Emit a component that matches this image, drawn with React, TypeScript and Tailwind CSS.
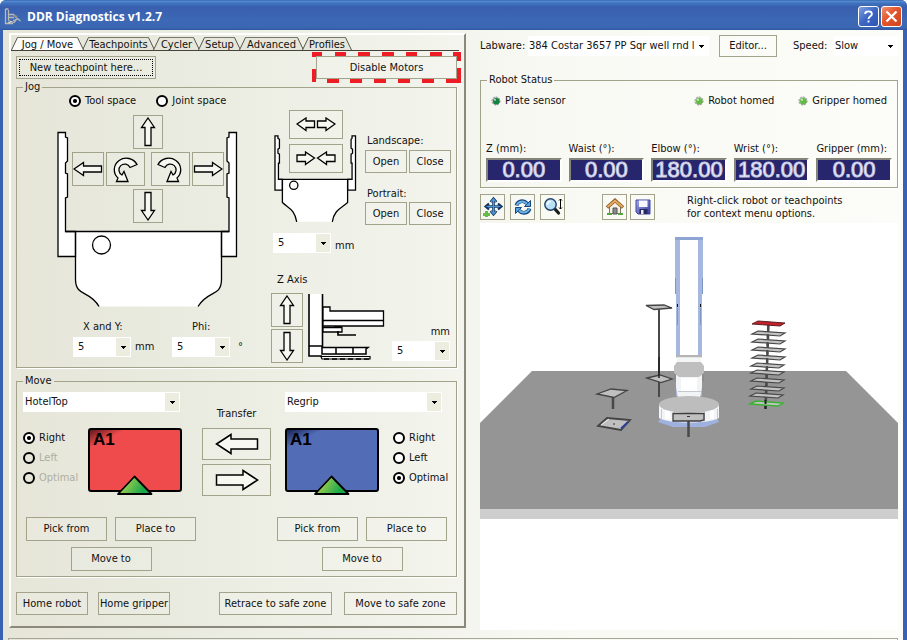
import React from "react";

type Kids = { children: React.ReactNode; className?: string };

function Btn({ children, className = "", label }: Kids & { label?: string }) {
  return (
    <button
      type="button"
      aria-label={label}
      className={`flex items-center justify-center whitespace-nowrap border border-[#a3a28a] bg-white/10 ${className}`}
    >
      {children}
    </button>
  );
}

function Combo({ label, options, className = "", plain = false, indent = "pl-1" }: { label: string; options: string[]; className?: string; plain?: boolean; indent?: string }) {
  return (
    <div className={`relative flex h-5 border border-white bg-white ${className}`}>
      <select aria-label={label} className={`w-full appearance-none overflow-hidden bg-transparent pr-3.5 text-[11px] leading-4 outline-none ${indent}`}>
        {options.map((o) => (
          <option key={o}>{o}</option>
        ))}
      </select>
      <span className={`pointer-events-none absolute inset-y-0 right-0 flex w-3.5 items-center justify-center ${plain ? "" : "bg-[#eceddf]"}`}>
        <svg width="5" height="3" viewBox="0 0 5 3" shapeRendering="crispEdges">
          <path d="M0 0h5v1H4v1H3v1H2V2H1V1H0z" />
        </svg>
      </span>
    </div>
  );
}

function Radio({ name, label, checked, disabled }: { name: string; label: string; checked?: boolean; disabled?: boolean }) {
  return (
    <label className={`flex items-center gap-1 ${disabled ? "text-[#aeae9f]" : ""}`}>
      <input
        type="radio"
        name={name}
        defaultChecked={checked}
        disabled={disabled}
        className="size-3 shrink-0 appearance-none rounded-full border-2 border-black bg-white checked:bg-[radial-gradient(circle,#000_0,#000_1.5px,#fff_2.5px)] disabled:bg-transparent"
      />
      {label}
    </label>
  );
}

function Group({ title, children, className = "" }: Kids & { title: string }) {
  return (
    <fieldset className={`min-w-0 border border-[#a3a28a] shadow-[1px_1px_0_#fff] ${className}`}>
      <legend className="ml-1.5 px-0.5 leading-[14px]">{title}</legend>
      {children}
    </fieldset>
  );
}

function Arrow({ dir }: { dir: "up" | "down" | "left" | "right" }) {
  const turn = { up: 0, right: 90, down: 180, left: 270 }[dir];
  return (
    <svg width="30" height="30" viewBox="0 0 30 30" className="shrink-0" fill="#f8f8f2" stroke="#000" strokeWidth="1.3">
      <path transform={`rotate(${turn} 15 15)`} d="M15 1 L21.500 10.500 H18 V28.500 H12 V10.500 H8.500 Z" />
    </svg>
  );
}

function WideArrow({ flip }: { flip?: boolean }) {
  return (
    <svg width="44" height="22" viewBox="0 0 44 22" fill="#f8f8f2" stroke="#000" strokeWidth="1.5">
      <path transform={flip ? "rotate(180 22 11)" : undefined} d="M1.500 11 L16 1.500 V6 H42.500 V16 H16 V20.500 Z" />
    </svg>
  );
}

function TurnArrow({ flip }: { flip?: boolean }) {
  return (
    <svg width="28" height="28" viewBox="0 0 28 28" fill="#f8f8f2" stroke="#000" strokeWidth="1.3">
      <path
        transform={flip ? "translate(28 0) scale(-1 1)" : undefined}
        d="M26 9.500 A12 11.500 0 1 0 7 23 L5.500 26.500 H17 L13 16.500 L11 20 A5.800 5.800 0 1 1 19 12.500 Z"
      />
    </svg>
  );
}

function PairArrows({ inward }: { inward?: boolean }) {
  const left = "M1 7 L10 1 V4 H18.500 V10.500 H10 V13.500 Z";
  return (
    <svg width="40" height="15" viewBox="0 0 40 15" fill="#f8f8f2" stroke="#000" strokeWidth="1.3">
      <path transform={inward ? "translate(20.500 0)" : undefined} d={left} />
      <path transform={inward ? "translate(19.500 0) scale(-1 1)" : "translate(40 0) scale(-1 1)"} d={left} />
    </svg>
  );
}

function BigGripper() {
  return (
    <svg viewBox="57 115 181 192" className="absolute inset-0 size-full" fill="#fff" stroke="#000" strokeWidth="1.300">
      <path stroke="none" d="M75.500 231V280C76 297 90 290 99 306.500H198C208 290 221 297 221.500 280V231Z" />
      <path d="M75.500 231.500V256.500H58V132.500H65.500V137L67.500 138V161L65.500 163V173L67.500 174V197L65.500 198V231.500Z" />
      <path d="M221.500 231.500V256.500H236.500V132.500H229V137L227 138V161L229 163V173L227 174V197L229 198V231.500Z" />
      <path fill="none" d="M65.500 231.500H229M75.500 231V280C76 297 90 290 99 306.500M221.500 231V280C221 297 208 290 198 306.500" />
      <circle cx="101.500" cy="245" r="9" />
    </svg>
  );
}

function SmallGripper() {
  return (
    <svg viewBox="274 110 84 113" className="absolute inset-0 size-full" fill="#fff" stroke="#000" strokeWidth="1.3">
      <path stroke="none" d="M282.500 179V203C289 209 295 210 297 222.500H333C335 210 342 209 348.500 203V179Z" />
      <path d="M282.500 179.500V190.500H275V135.500H278V138L279.500 139V148L278 149V153L279.500 154V163H278.500V179.500Z" />
      <path d="M348.500 179.500V190.500H356.500V135.500H353V138L352 139V148L353.500 149V153L352 154V163H353V179.500Z" />
      <path fill="none" d="M278 179.500H353M282.500 179V203C289 209 295 210 297 222.500M348.500 179V203C342 209 335 210 333 222.500" />
      <circle cx="294" cy="185.500" r="4.200" />
    </svg>
  );
}

function ZDrawing() {
  return (
    <svg width="78" height="68" viewBox="308 294 78 68" fill="#fff" stroke="#000" strokeWidth="1.3">
      <path stroke="none" d="M309 295H322V357H309Z" />
      <path fill="none" strokeWidth="1.6" d="M309 295V357H322M322.500 295V350M309 347H322" />
      <path d="M323 308H330V312H383.500V327H323ZM323 321.500H383" />
      <path d="M323 328.500H342V333H323Z" />
      <path fill="none" strokeWidth="1.700" d="M334 328H342M338 332V336H356" />
      <path d="M322 348.500H368L366 350V355H322ZM336 349V355M353 349V355" strokeWidth="1.500" />
      <path d="M321 357.500H370V360H322Z" strokeWidth="1.200" />
      <path d="M324 360H370" strokeWidth="1.600" strokeDasharray="5 3" />
    </svg>
  );
}

function Plate({ tone }: { tone: "red" | "blue" }) {
  const fill = tone === "red" ? "#ef4b4c" : "#526cb5";
  const dark = tone === "red" ? "#541416" : "#121d4e";
  return (
    <svg width="94" height="68" viewBox="0 0 94 68" stroke="#000" className="shrink-0">
      <defs>
        <linearGradient id={`corner-${tone}`} x1="0" y1="0" x2="0.15" y2="0.2">
          <stop offset="0" stopColor={dark} />
          <stop offset="1" stopColor={fill} />
        </linearGradient>
        <linearGradient id={`tri-${tone}`} x1="0" y1="0" x2="1" y2="0.3">
          <stop offset="0.3" stopColor="#9bcb50" />
          <stop offset="0.9" stopColor="#18a84a" />
        </linearGradient>
      </defs>
      <rect x="1" y="1" width="92" height="62" rx="2" fill={`url(#corner-${tone})`} strokeWidth="2" />
      <path d="M30 66 L46.500 48.500 L63.500 66 Z" fill={`url(#tri-${tone})`} strokeWidth="1.800" strokeLinejoin="round" />
      <text x="5" y="17" fontFamily="Liberation Sans, sans-serif" fontSize="17" fontWeight="bold" stroke="none">A1</text>
    </svg>
  );
}

function Tab({ label, active, className }: { label: string; active?: boolean; className: string }) {
  const fill = active ? "#fcfcfa" : "#e6e7da";
  return (
    <button
      type="button"
      role="tab"
      aria-selected={!!active}
      className={`-mr-0.5 flex h-[13px] ${className} ${active ? "relative z-10" : ""}`}
    >
      <svg width="7" height="13" viewBox="0 0 7 13" className="shrink-0">
        <path d="M0.500 13 L6.500 0.500 H7 V13Z" fill={fill} />
        <path d="M0.500 13 L6.500 0.500 H7" fill="none" stroke="#55554d" />
      </svg>
      <span className={`h-[13px] flex-1 whitespace-nowrap border-t border-[#77776d] text-center text-[11px] leading-[13px] ${active ? "bg-[#fcfcfa]" : "bg-[#e6e7da]"}`}>
        {label}
      </span>
      <svg width="7" height="13" viewBox="0 0 7 13" className="shrink-0">
        <path d="M0 0.500 H0.500 L6.500 13 H0Z" fill={fill} />
        <path d="M0 0.500 H0.500 L6.500 13" fill="none" stroke="#55554d" />
      </svg>
    </button>
  );
}

function Led({ label, dark }: { label: string; dark?: boolean }) {
  return (
    <span className="flex items-center gap-1">
      <svg width="10" height="10" viewBox="0 0 10 10">
        <circle cx="5" cy="5" r="4" fill="#ddd" stroke="#888" strokeDasharray="2 1" />
        <circle cx="5.300" cy="5.300" r="3.300" fill={dark ? "#118243" : "#62bb46"} />
        <circle cx="4" cy="3.800" r="0.900" fill="#e8ffe0" />
      </svg>
      {label}
    </span>
  );
}

function Readout({ label, value }: { label: string; value: string }) {
  return (
    <div className="flex min-w-0 flex-col gap-0.5">
      <span className="whitespace-nowrap">{label}</span>
      <output
        aria-label={label}
        className="flex h-6 items-center justify-center overflow-hidden border-2 border-b-white border-l-[#85847a] border-r-white border-t-[#85847a] bg-[#27266c] font-['Liberation_Sans',sans-serif] text-[22px] leading-5 text-white [-webkit-text-stroke:1px_#c3c4e2]"
      >
        {value}
      </output>
    </div>
  );
}

function MovePanel({ name, place, tone, right }: { name: string; place: string; tone: "red" | "blue"; right?: boolean }) {
  const radios = (
    <div className="flex flex-col gap-1.5 pt-[3px]">
      <Radio name={name} label="Right" checked={!right} />
      <Radio name={name} label="Left" disabled={!right} />
      <Radio name={name} label="Optimal" checked={right} disabled={!right} />
    </div>
  );
  return (
    <div className="flex w-[173px] shrink-0 flex-col pt-1">
      <Combo indent="pl-px" label={`${name} teachpoint`} options={[place]} className={`w-[157px] ${right ? "ml-2" : ""}`} />
      <div className={`mt-4 flex ${right ? "ml-2 gap-3.5" : "justify-between pr-3.5"}`}>
        {!right && radios}
        <Plate tone={tone} />
        {right && radios}
      </div>
      <div className={`mt-[21px] flex w-[170px] flex-wrap justify-center gap-x-2 gap-y-1.5 ${right ? "" : "ml-[3px]"}`}>
        <Btn className="h-6 w-[81px]">Pick from</Btn>
        <Btn className="h-6 w-[81px]">Place to</Btn>
        <Btn className="h-6 w-[81px]">Move to</Btn>
      </div>
    </div>
  );
}

const slab = (cx: number, y: number) => `M${cx - 17} ${y + 1}L${cx - 11} ${y - 2}L${cx + 16} ${y}L${cx + 11} ${y + 3}Z`;
const shelves = [333, 341, 349, 357, 365, 372, 380, 388, 395];

function Scene() {
  return (
    <svg viewBox="480 223 418 407" preserveAspectRatio="xMidYMin slice" className="min-h-[407px] w-full flex-1 bg-white">
      <path fill="#959595" d="M532 371H846L898 423V509H480V423Z" />
      <path fill="#cecece" d="M480 509H898V519H480Z" />
      <g stroke="#484848" strokeWidth="2">
        <path d="M659 309V397" />
        <path d="M613 397V409" strokeWidth="2.500" />
      </g>
      <g fill="#bfbfbf" stroke="#444" strokeWidth="1.300">
        <path d="M646 305.500L664 305L672 308L654 309.500Z" />
        <path d="M647 378L660 375L672 379L661 382.500Z" />
        <path d="M597 394L611 389L627 390.500L614 397.500Z" />
        <path d="M598 426L607 418L630 420L621 430Z" strokeWidth="1.800" />
      </g>
      <path d="M628 422L621 428.500" stroke="#2b3f9c" strokeWidth="1.800" />
      <path d="M601 425L609 419" stroke="#eee" />
      <path d="M613 424H615" stroke="#333" />
      <path d="M659 357V378" stroke="#222" strokeWidth="1.500" />

      <path fill="#a7b8e0" d="M675 237H703V294H702V356H676V294H675Z" />
      <path fill="#8ea5d4" d="M675 237H703V240H675Z" />
      <path fill="#fff" d="M680 240H698V356H680Z" />
      <path stroke="#7f96c6" d="M677.500 308V325M700.500 308V325M675.500 278V294M702.500 278V294" />
      <path stroke="#111" d="M677.500 304V307M700.500 304V307" />
      <path fill="#b4b4b4" d="M676 355H702V357.500H676Z" />
      <path fill="#f4f5f7" d="M677 357.500H701V362H677Z" />
      <path fill="#8b8b8b" d="M674 366H704V381H674Z" />
      <path fill="#a7b8e0" d="M676 387H702V396H676Z" />
      <path fill="#f1f3f4" d="M676 375H702V387L700 398H678L676 387Z" />
      <path fill="#fff" d="M681 378H697V391H681Z" />
      <path stroke="#c5c9ce" d="M678 391.500H701" />
      <path fill="#bfbfbf" d="M677 362H701L704 366V373L699 377H679L674 373V366Z" />
      <path fill="#9fb2df" d="M661 418H717L719 422L705 427H673L658 422Z" />
      <path fill="#f2f4f5" d="M659 404H719V418C709 424 669 424 659 418Z" />
      <path fill="#fff" d="M665 408H670V419H665ZM681 410H698V422H681ZM710 408H714V419H710Z" />
      <path stroke="#c6cacc" d="M661.500 409V419M674.500 411V421M704.500 411V421M717.500 409V419" />
      <ellipse cx="689" cy="404.500" rx="30" ry="8.500" fill="#bdbdbd" />
      <path stroke="#484848" strokeWidth="2.500" d="M688.500 421V437" />
      <path fill="#c0c0c0" stroke="#3c3c3c" strokeWidth="1.300" d="M673 413.500H704V420L700 421H673Z" />
      <path stroke="#333" d="M687 416.500H690" />

      <path stroke="#4b4b4b" strokeWidth="2.500" d="M768.500 323L765.500 409" />
      <path d={slab(769, 323)} fill="#c3202a" stroke="#5c2225" />
      {shelves.map((y, i) => (
        <path key={y} d={slab(769 - Math.floor(i / 4), y)} fill="#c2c2c2" stroke="#484848" strokeWidth="1.200" />
      ))}
      <path stroke="#4b4b4b" strokeWidth="2" strokeDasharray="4 4" d="M768 326L766 400" />
      <path d={slab(767, 403)} fill="#c2c2c2" stroke="#38b52f" strokeWidth="1.400" />
      <path stroke="#222" strokeWidth="2" d="M765.500 400V404M765.500 406V409" />
    </svg>
  );
}

function MoveIcon() {
  return (
    <svg width="22" height="22" viewBox="0 0 22 22">
      <path d="M11.500 4V17M5 10.500H18" stroke="#12355f" strokeWidth="2.600" />
      <path d="M8.500 6L11.500 2.500L14.500 6M8.500 15L11.500 18.500L14.500 15M7 7.500L3.500 10.500L7 13.500M16 7.500L19.500 10.500L16 13.500" stroke="#12355f" strokeWidth="2.200" fill="none" />
      <path d="M11.500 3.500V17.500M4.500 10.500H18.500M9 5.800L11.500 3L14 5.800M9 15.200L11.500 18L14 15.200" stroke="#4b9ae0" strokeWidth="1.200" fill="none" />
      <path d="M3 15H6V17H8V20H6V21H3V20H1V17H3Z" fill="#65bd45" />
    </svg>
  );
}

function RefreshIcon() {
  return (
    <svg width="20" height="20" viewBox="0 0 20 20" fill="none">
      <path d="M3.500 8.500C4.500 4 10.500 2.500 14 6.500M16.500 11.500C15.500 16 9.500 17.500 6 13.500" stroke="#16467c" strokeWidth="3.800" />
      <path d="M17.500 3.500V9.500H11.500ZM2.500 16.500V10.500H8.500Z" fill="#55a2dc" stroke="#16467c" />
      <path d="M3.800 8.300C5 4.500 10.500 3 14 6.800M16.200 11.700C15 15.500 9.500 17 6 13.200" stroke="#6bb4ea" strokeWidth="2" />
    </svg>
  );
}

function ZoomIcon() {
  return (
    <svg width="22" height="22" viewBox="0 0 22 22">
      <path d="M12.500 12.500L16.500 17" stroke="#1b1b1b" strokeWidth="3.200" strokeLinecap="round" />
      <circle cx="8.500" cy="8.500" r="5.700" fill="#b8e0f8" stroke="#1f3f63" strokeWidth="1.400" />
      <path d="M5.500 9A3 3 0 0 1 9 5.500" stroke="#fff" strokeWidth="1.600" fill="none" />
      <path d="M18.500 3V13M17 4.500L18.500 3L20 4.500M17 11.500L18.500 13L20 11.500" stroke="#000" fill="none" />
    </svg>
  );
}

function HomeIcon() {
  return (
    <svg width="20" height="20" viewBox="0 0 20 20">
      <path d="M4.500 9.500L10 5L15.500 9.500V16.500H4.500Z" fill="#f4f0e6" stroke="#7d7466" />
      <path d="M8 11H12V17H8Z" fill="#8b8b8b" stroke="#555" />
      <path d="M2 10.500L10 3.500L18 10.500" fill="none" stroke="#8a5a24" strokeWidth="3.600" />
      <path d="M2.500 10L10 3.700L17.500 10" fill="none" stroke="#e9ae62" strokeWidth="1.800" />
      <path d="M2 17H7M13 17H18" stroke="#54a53c" strokeWidth="2" />
    </svg>
  );
}

function SaveIcon() {
  return (
    <svg width="16" height="16" viewBox="0 0 16 16">
      <defs>
        <linearGradient id="disk" x1="0" y1="0" x2="1" y2="1">
          <stop offset="0" stopColor="#a3aee6" />
          <stop offset="1" stopColor="#3438a0" />
        </linearGradient>
      </defs>
      <path d="M1 1H15V15H3L1 13Z" fill="url(#disk)" stroke="#45479e" />
      <path d="M4 1.500H12.500V8H4Z" fill="#f6f8fd" />
      <path d="M4.500 10H12.500V15H4.500Z" fill="#26285e" />
      <path d="M6 11H8.500V15H6Z" fill="#e9ebf4" />
    </svg>
  );
}

function TitleBar() {
  return (
    <header className="flex h-[30px] items-center gap-0.5 bg-[linear-gradient(#2b56a8_0,#5890d2_1px,#4074c0_3px,#385fae_7px,#3c68b5_20px,#3b66b2_28px,#2f549f_30px)] pl-1 pr-[5px] pt-[3px]">
      <svg width="18" height="18" viewBox="0 0 18 18" fill="none" stroke="#b9bab5" strokeWidth="1.300" className="mr-[3px]">
        <path d="M1.500 1V15.500H9M4.500 2V12M4.500 6.500H9.500L12 9.500L16.500 13M5 9.500H10M9 12.500L14 11" />
        <path d="M1.500 1H4.500M4 12.500L10 14.500L12 12" />
        <path d="M4 15L8 13.500" stroke="#e0dac8" />
        <path d="M10 7.500L13 9" stroke="#8e918f" strokeWidth="2" />
      </svg>
      <h1 className="flex-1 font-['Open_Sans',sans-serif] text-[12px] font-bold leading-4 text-white">DDR Diagnostics v1.2.7</h1>
      <button type="button" aria-label="Help" className="flex size-[21px] items-center justify-center rounded-[3px] border border-white bg-[linear-gradient(135deg,#7f9fe0,#3b66c4_50%,#2d56b4)]">
        <svg width="11" height="15" viewBox="0 0 13 15" fill="none" stroke="#fff" strokeWidth="2.200">
          <path d="M2.500 4.500C2.500 0.500 10.500 0.500 10.500 4.500C10.500 7.500 6.500 7 6.500 10.500M6.500 12.300V14.500" />
        </svg>
      </button>
      <button type="button" aria-label="Close window" className="flex size-[21px] items-center justify-center rounded-[3px] border border-white bg-[linear-gradient(135deg,#f0906f,#e2552c_45%,#cf4420)]">
        <svg width="13" height="13" viewBox="0 0 13 13" stroke="#fff" strokeWidth="2.300">
          <path d="M1.500 1.500L11.500 11.500M11.500 1.500L1.500 11.500" />
        </svg>
      </button>
    </header>
  );
}

function JogGroup() {
  return (
    <Group title="Jog" className="mt-px flex h-[288px] w-[441px]">
      <div className="flex">
        <div className="flex w-[248px] flex-col pl-10">
          <div className="flex h-3.5 gap-5 pl-3">
            <Radio name="space" label="Tool space" checked />
            <Radio name="space" label="Joint space" />
          </div>
          <div className="relative mt-[7px] flex h-48 w-[181px] flex-col items-center gap-[3px]">
            <BigGripper />
            <Btn label="Jog forward" className="relative h-[34px] w-[30px]"><Arrow dir="up" /></Btn>
            <div className="relative flex gap-0.5">
              <Btn label="Jog left" className="h-[34px] w-8"><Arrow dir="left" /></Btn>
              <Btn label="Rotate counterclockwise" className="mr-1 h-[34px] w-[39px]"><TurnArrow /></Btn>
              <Btn label="Rotate clockwise" className="h-[34px] w-[39px]"><TurnArrow flip /></Btn>
              <Btn label="Jog right" className="h-[34px] w-8"><Arrow dir="right" /></Btn>
            </div>
            <Btn label="Jog back" className="relative h-[34px] w-[30px]"><Arrow dir="down" /></Btn>
          </div>
          <div className="mt-[13px] flex gap-[10px] pl-4">
            <div className="flex w-[89px] flex-col gap-[3px]">
              <span className="pl-[10px]">X and Y:</span>
              <div className="flex items-center gap-1">
                <Combo label="X and Y step" options={["5"]} className="w-[58px]" />mm
              </div>
            </div>
            <div className="flex flex-col gap-[3px]">
              <span className="pl-5">Phi:</span>
              <div className="flex items-center gap-2">
                <Combo label="Phi step" options={["5"]} className="w-[58px]" />°
              </div>
            </div>
          </div>
        </div>
        <div className="flex w-[186px] flex-col pl-1.5 pt-4">
          <div className="flex gap-2 pl-[3px]">
            <div className="relative flex h-[113px] w-[84px] flex-col items-center gap-[5px]">
              <SmallGripper />
              <Btn label="Open gripper" className="relative h-[29px] w-[54px]"><PairArrows /></Btn>
              <Btn label="Close gripper" className="relative h-[29px] w-[54px]"><PairArrows inward /></Btn>
            </div>
            <div className="flex flex-col pt-6">
              <span className="pl-0.5">Landscape:</span>
              <div className="mt-0.5 flex gap-0.5">
                <Btn className="h-[23px] w-[42px]">Open</Btn>
                <Btn className="h-[23px] w-[42px]">Close</Btn>
              </div>
              <span className="mt-3.5 pl-0.5">Portrait:</span>
              <div className="mt-px flex gap-0.5">
                <Btn className="h-[23px] w-[42px]">Open</Btn>
                <Btn className="h-[23px] w-[42px]">Close</Btn>
              </div>
            </div>
          </div>
          <div className="mt-2 flex items-end gap-1 pl-0.5">
            <Combo label="Gripper step" options={["5"]} className="w-[58px]" />
            mm
          </div>
          <span className="mt-5 pl-1.5">Z Axis</span>
          <div className="mt-1.5 flex">
            <div className="flex flex-col gap-0.5">
              <Btn label="Z up" className="h-[34px] w-8"><Arrow dir="up" /></Btn>
              <Btn label="Z down" className="h-[34px] w-8"><Arrow dir="down" /></Btn>
            </div>
            <div className="pl-[5px]"><ZDrawing /></div>
            <div className="flex flex-col items-end gap-0.5 pl-1.5 pt-8">
              <span>mm</span>
              <Combo label="Z step" options={["5"]} className="w-[58px]" />
            </div>
          </div>
        </div>
      </div>
    </Group>
  );
}

export default function App() {
  return (
    <div className="h-screen min-h-[640px] overflow-hidden bg-white font-['DejaVu_Sans_Condensed','DejaVu_Sans',sans-serif] text-[11px] leading-[14px] text-[#111]">
      <div className="flex min-h-full flex-col overflow-hidden rounded-t-md bg-[#3a62b4]">
        <TitleBar />
        <div className="ml-[3px] mr-1 flex flex-1 flex-col bg-[linear-gradient(90deg,#e5e6d8,#f1f2ea_45%,#f9f9f4_60%,#fcfcf8)]">
          <div className="flex gap-3.5 pl-1.5 pr-[5px] pt-[3px]">
            <main className="flex h-[595px] w-[457px] shrink-0 flex-col border-2 border-b-[#8b897c] border-l-white border-r-[#8b897c] border-t-white px-[5px]">
              <div role="tablist" className="-ml-[5px] mt-0.5 flex border-b border-[#44443c]">
                <Tab label="Jog / Move" active className="w-[73px]" />
                <Tab label="Teachpoints" className="w-[73px]" />
                <Tab label="Cycler" className="w-[47px]" />
                <Tab label="Setup" className="w-[43px]" />
                <Tab label="Advanced" className="w-[65px]" />
                <Tab label="Profiles" className="w-[50px]" />
              </div>
              <div className="mt-[5px] flex w-[441px] items-center justify-between">
                <Btn className="h-[23px] w-[140px] p-0.5">
                  <span className="flex size-full items-center justify-center border border-dotted border-black">New teachpoint here...</span>
                </Btn>
                <div className="relative">
                  <Btn className="h-[23px] w-[141px]">Disable Motors</Btn>
                  <svg width="149" height="31" viewBox="0 0 149 31" className="pointer-events-none absolute -left-1 -top-1 max-w-none" stroke="#ee1c25" strokeWidth="4">
                    <path d="M0 2H10M23 2H34M46 2H58M70 2H82M94 2H105M118 2H130M141 2H149" />
                    <path d="M15 29H27M38 29H50M62 29H74M86 29H98M110 29H122M134 29H149" />
                    <path d="M2 0V5M2 17V30M147 0V9M147 16V31" />
                  </svg>
                </div>
              </div>
              <JogGroup />
              <Group title="Move" className="mt-1.5 h-[203px] w-[441px]">
                <div className="flex px-1.5">
                  <MovePanel name="source" place="HotelTop" tone="red" />
                  <div className="ml-1.5 flex flex-col items-center pt-[19px]">
                    <span>Transfer</span>
                    <Btn label="Transfer left" className="mt-[7px] h-8 w-[69px]"><WideArrow /></Btn>
                    <Btn label="Transfer right" className="mt-1 h-8 w-[69px]"><WideArrow flip /></Btn>
                  </div>
                  <div className="ml-1.5"><MovePanel name="target" place="Regrip" tone="blue" right /></div>
                </div>
              </Group>
              <div className="mt-[15px] flex w-[441px] justify-between">
                <div className="flex gap-2.5">
                  <Btn className="h-[23px] w-[72px]">Home robot</Btn>
                  <Btn className="h-[23px] w-[72px]">Home gripper</Btn>
                </div>
                <div className="flex gap-3">
                  <Btn className="h-[23px] w-[113px]">Retrace to safe zone</Btn>
                  <Btn className="h-[23px] w-[113px]">Move to safe zone</Btn>
                </div>
              </div>
            </main>
            <aside className="flex min-w-0 flex-1 flex-col">
              <div className="flex items-center pt-0.5">
                <span className="w-12">Labware:</span>
                <Combo plain indent="pl-0" label="Labware" options={["384 Costar 3657 PP Sqr well rnd l"]} className="min-w-0 flex-1" />
                <Btn className="ml-2.5 h-[22px] w-[58px]">Editor...</Btn>
                <span className="ml-4 w-[41px]">Speed:</span>
                <Combo plain indent="pl-0" label="Speed" options={["Slow"]} className="w-16" />
              </div>
              <Group title="Robot Status" className="mt-4 h-[115px]">
                <div className="flex px-2.5 pt-[7px]">
                  <div className="flex-1"><Led label="Plate sensor" dark /></div>
                  <div className="flex gap-6">
                    <Led label="Robot homed" />
                    <Led label="Gripper homed" />
                  </div>
                </div>
                <div className="mt-[34px] grid grid-cols-5 gap-[7px] px-[5px]">
                  <Readout label="Z (mm):" value="0.00" />
                  <Readout label="Waist (°):" value="0.00" />
                  <Readout label="Elbow (°):" value="180.00" />
                  <Readout label="Wrist (°):" value="180.00" />
                  <Readout label="Gripper (mm):" value="0.00" />
                </div>
              </Group>
              <div className="mb-[3px] mt-1.5 flex h-[26px] items-center">
                <div className="flex gap-[5px]">
                  <Btn label="Pan view" className="h-[26px] w-[25px]"><MoveIcon /></Btn>
                  <Btn label="Rotate view" className="h-[26px] w-[25px]"><RefreshIcon /></Btn>
                  <Btn label="Zoom view" className="h-[26px] w-[25px]"><ZoomIcon /></Btn>
                </div>
                <div className="ml-[37px] flex gap-[3px]">
                  <Btn label="Default view" className="h-[26px] w-[25px]"><HomeIcon /></Btn>
                  <Btn label="Save view" className="h-[26px] w-[25px]"><SaveIcon /></Btn>
                </div>
                <p className="ml-8 leading-[13px]">Right-click robot or teachpoints<br />for context menu options.</p>
              </div>
              <Scene />
            </aside>
          </div>
          <div className="mx-[5px] mt-2 min-h-0.5 flex-1 border border-b-0 border-[#a8a698]" />
        </div>
      </div>
    </div>
  );
}
